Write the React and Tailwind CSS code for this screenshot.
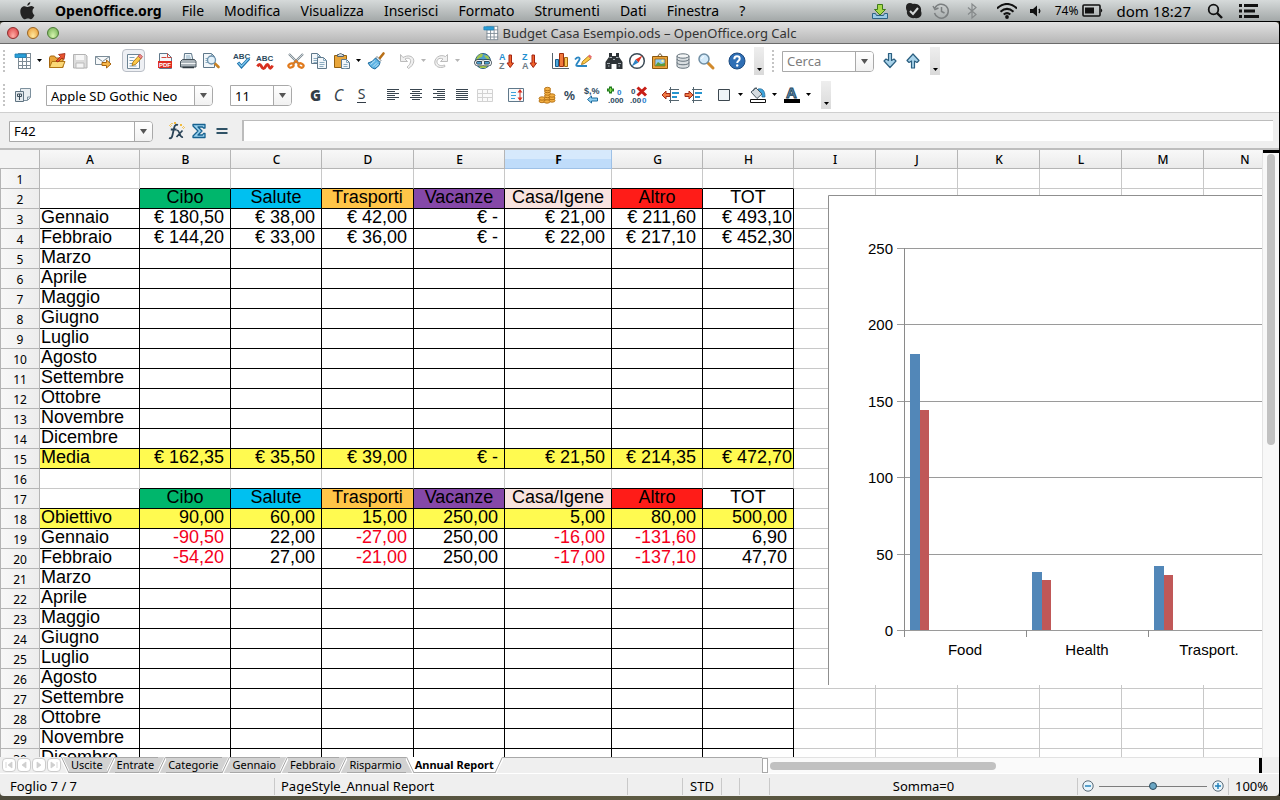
import React from "react";

/* ---------- icons ---------- */

const Svg = ({ children, s = 18, className = "" }) => (
  <svg width={s} height={s} viewBox="0 0 18 18" fill="none" aria-hidden="true" className={"shrink-0 overflow-visible " + className}>
    {children}
  </svg>
);

const Label = ({ x, y, size = 7, fill = "#2c4a5e", children }) => (
  <text x={x} y={y} fontSize={size} fill={fill} fontWeight="700" fontFamily='"Liberation Sans", sans-serif'>
    {children}
  </text>
);

const Lens = ({ x, y, r = 4 }) => (
  <g>
    <path d={`M${x + r * 0.7} ${y + r * 0.7}L${x + r + 3} ${y + r + 3}`} stroke="#c98122" strokeWidth="2.6" strokeLinecap="round" />
    <circle cx={x} cy={y} r={r} fill="#e4f2fb" stroke="#6f93ad" strokeWidth="1.4" />
  </g>
);

const Page = ({ x, y, w = 9, h = 12 }) => (
  <g>
    <path d={`M${x} ${y}h${w - 3}l3 3v${h - 3}h-${w}z`} fill="#f3f7fa" stroke="#60788a" />
    <path d={`M${x + w - 3} ${y}v3h3M${x + 2} ${y + 5}h${w - 4}M${x + 2} ${y + 7}h${w - 4}M${x + 2} ${y + 9}h${w - 5}`} stroke="#7fa3ba" strokeWidth="0.9" />
  </g>
);

const Arrow = ({ d }) => <path d={d} fill="#a9d3ea" stroke="#2b5f80" strokeWidth="1.2" strokeLinejoin="round" />;

const SheetGlyph = ({ s }) => (
  <Svg s={s}>
    <path d="M4.500 1.500h12v15h-12z" fill="#fff" />
    <path d="M4.500 1.500v15M8.500 1.500v15M12.500 1.500v15M16.500 1.500v15M4 1.500h13M4 5.500h13M4 9.500h13M4 13.500h13M4 16.500h13" stroke="#7d8b95" />
    <path d="M1 2h11v3.500H1z" fill="#2a9fd8" stroke="#1b7fb5" strokeWidth="0.8" />
  </Svg>
);

const Lines = ({ rows }) => (
  <Svg>
    {rows.map(([a, b], i) => (
      <path key={i} d={`M${a} ${3.5 + i * 2}H${b}`} stroke="#39454f" strokeWidth="1" />
    ))}
  </Svg>
);

const Sort = ({ a, b, ca, cb }) => (
  <Svg>
    <Label x={2} y={8} size={9}>{""}</Label>
    <Label x={2} y={8} size={9} fill={ca}>{a}</Label>
    <Label x={2} y={17} size={9} fill={cb}>{b}</Label>
    <path d="M12 3h2.500v8h2l-3.250 4.500L10 11h2z" fill="#f0642c" stroke="#a32312" />
  </Svg>
);

const Indent = ({ left }) => (
  <Svg>
    <path d="M8 3.500h10M8 14.500h10M9.500 1v16" stroke="#54656f" />
    <path d="M11 7h7M11 11h5" stroke="#2695cf" strokeWidth="2" />
    <path d={left ? "M1 9l4-4v2.500h4v3H5V13z" : "M9 9L5 5v2.500H1v3h4V13z"} fill="#f27b45" stroke="#a32a17" strokeLinejoin="round" />
  </Svg>
);

const icons = {
  sheet: <SheetGlyph />,
  open: (
    <Svg>
      <path d="M1.500 15.500v-10l1-1.500h4l1.500 2h7v9.500z" fill="#e9a63a" stroke="#a4650f" />
      <path d="M1.500 15.500l2.500-6h13l-2.500 6z" fill="#fbd877" stroke="#b07414" strokeLinejoin="round" />
      <path d="M8 9l4.500-4.500L10.500 2.500 17 1.500l-1 6-2-1.500L10 10z" fill="#e8532e" stroke="#9c2413" strokeWidth="0.8" />
    </Svg>
  ),
  save: (
    <Svg>
      <path d="M2.500 2.500h12l1.500 1.500v12h-13.500z" fill="#dcdcdc" stroke="#b3b3b3" />
      <path d="M5 3h8v5H5z" fill="#f7f7f7" />
      <path d="M5 11h8v5H5z" fill="#f4f4f4" stroke="#bbb" />
    </Svg>
  ),
  mail: (
    <Svg>
      <path d="M1.500 4.500h14v8h-14z" fill="#f7f9fa" stroke="#7b8c98" />
      <path d="M1.500 4.500l7 5 7-5" stroke="#7b8c98" />
      <path d="M8 10.500h4.500V8L17 12l-4.500 4v-2.500H8z" fill="#f8b84b" stroke="#a8650f" />
    </Svg>
  ),
  edit: (
    <Svg>
      <path d="M2.500 2.500h12v14h-12z" fill="#fbfcfd" stroke="#6c8494" />
      <path d="M4.500 5.500h5M4.500 8.500h4M4.500 11.500h4M4.500 14h7" stroke="#7fa3ba" />
      <path d="M7 13.500l1-3.500 6-6.500 2.500 2.500-6 6.500z" fill="#fbc94a" stroke="#a8740f" strokeWidth="0.900" />
      <path d="M13.200 4.200l1.800-2 2.500 2.500-1.800 2z" fill="#ef8d8d" stroke="#b34545" strokeWidth="0.800" />
    </Svg>
  ),
  pdf: (
    <Svg>
      <path d="M3.500 1.500h8l4 4v11h-12z" fill="#f3f7fa" stroke="#60788a" />
      <path d="M11.500 1.500v4h4M5.500 5.500h5" stroke="#d0453a" />
      <path d="M2 9h14v7H2z" fill="#dd2b20" />
      <Label x={3} y={15} size={6} fill="#fff">PDF</Label>
    </Svg>
  ),
  print: (
    <Svg>
      <path d="M5.500 1.500h7l1.500 7H5z" fill="#eef4f8" stroke="#60788a" />
      <path d="M7 4h4M7 6h5" stroke="#8fb0c4" />
      <path d="M1.500 9.500l2-2h12l1.500 2v5.500h-15.500z" fill="#a9b2b8" stroke="#47545d" />
      <path d="M2 11.500h14.500" stroke="#f0f3f4" />
      <path d="M3.500 15.500h11.500" stroke="#2f3940" strokeWidth="1.500" />
    </Svg>
  ),
  preview: (
    <Svg>
      <Page x={1.5} y={1.5} w={11} h={14} />
      <Lens x={9.5} y={8} />
    </Svg>
  ),
  spell: (
    <Svg>
      <Label x={0} y={6.500} size={8}>ABC</Label>
      <path d="M5 10.500l3.500 4 7.500-8" stroke="#1c70a8" strokeWidth="3.200" />
      <path d="M5.500 11l3 3.200 7-7.400" stroke="#7fc7ee" strokeWidth="1.300" />
    </Svg>
  ),
  autospell: (
    <Svg>
      <Label x={0} y={9} size={8}>ABC</Label>
      <path d="M1.500 14.500q2-4 4 0t4 0q2-4 3.500 0t3.500-1" stroke="#d8301f" strokeWidth="2.800" />
    </Svg>
  ),
  cut: (
    <Svg>
      <path d="M2 2l10 10M16 2L6 12" stroke="#7c8991" strokeWidth="2.200" />
      <path d="M2 2l10 10M16 2L6 12" stroke="#dfe5e8" strokeWidth="0.800" />
      <ellipse cx="4" cy="13.500" rx="2.700" ry="2" stroke="#e07a1c" strokeWidth="2.200" transform="rotate(-25 4 13.500)" />
      <ellipse cx="14" cy="13.500" rx="2.700" ry="2" stroke="#e07a1c" strokeWidth="2.200" transform="rotate(25 14 13.500)" />
      <path d="M7 11l2-2 2 2" stroke="#e07a1c" strokeWidth="2" />
    </Svg>
  ),
  copy: (
    <Svg>
      <Page x={1.5} y={1.5} w={9} h={10} />
      <Page x={7.5} y={5.5} w={9} h={11} />
    </Svg>
  ),
  paste: (
    <Svg>
      <path d="M1.500 3.500h12v12h-12z" fill="#e9a63a" stroke="#94600f" />
      <path d="M4.500 4.500V2.500h1.500l1.500-1.500 1.500 1.500h1.500v2z" fill="#cfd6da" stroke="#56636b" />
      <Page x={8.5} y={7.5} w={8} h={9} />
    </Svg>
  ),
  brush: (
    <Svg>
      <path d="M16.500 1.500l-4 5" stroke="#b86f17" strokeWidth="2.600" strokeLinecap="round" />
      <path d="M10 4.500l4 4-1.500 1.500-4-4z" fill="#e8edf0" stroke="#5c6c77" strokeWidth="0.800" />
      <path d="M8.500 6l4.500 4.500-1 3-4 3.500-2.500-1-2-1.500-2.500-3.500 4-1.500z" fill="#5fb4e4" stroke="#1f6d9f" strokeLinejoin="round" />
      <path d="M8 8.500l-4.500 4M10 10.500l-4 4M11.500 12l-3 3" stroke="#d5effc" strokeWidth="0.800" />
    </Svg>
  ),
  undo: (
    <Svg>
      <path d="M2.500 2.500v7h7l-2.500-2.500c4-2 7 0 5 4.500-.5 1.500-2 2.500-3 3.500l1.500 1.500c6-3.500 7-10 2.500-12-3-1.500-6 0-8 1z" fill="#f0f0f0" stroke="#bcbcbc" strokeLinejoin="round" />
    </Svg>
  ),
  redo: (
    <Svg>
      <path d="M15.500 2.500v7h-7l2.500-2.500c-4-2-7.500 1-5.500 4.500 1.500 2.500 4.500 2.500 7 1.500l.5 1.500c-4 2-8.500 1-10-2.500-1.500-5.500 4.500-10.500 10.500-7.500z" fill="#f0f0f0" stroke="#bcbcbc" strokeLinejoin="round" />
    </Svg>
  ),
  globe: (
    <Svg>
      <circle cx="9" cy="9" r="7.500" fill="#4d9fd0" stroke="#2a5c7e" />
      <path d="M3 5q3-4 6-3l-1 3-3 1-2 3-1-1zM10 3l4 1 2 4-3-1-2-2zM4 12q5 3 10 1l-2 3H6z" fill="#a3c64c" />
      <rect x="1.500" y="8.500" width="8" height="4.500" rx="2.250" stroke="#2b3a44" strokeWidth="2.600" />
      <rect x="8.500" y="8.500" width="8" height="4.500" rx="2.250" stroke="#2b3a44" strokeWidth="2.600" />
      <rect x="1.500" y="8.500" width="8" height="4.500" rx="2.250" stroke="#eef2f4" strokeWidth="1.200" />
      <rect x="8.500" y="8.500" width="8" height="4.500" rx="2.250" stroke="#eef2f4" strokeWidth="1.200" />
    </Svg>
  ),
  sortAsc: <Sort a="A" b="Z" ca="#1f8fd0" cb="#6f7c85" />,
  sortDesc: <Sort a="Z" b="A" ca="#1f8fd0" cb="#6f7c85" />,
  chart: (
    <Svg>
      <path d="M1.500 1v15.500H18" stroke="#55636c" />
      <path d="M4.500 7.500h3v7h-3z" fill="#4fa9de" stroke="#1a5e8c" />
      <path d="M8.500 1.500h4v13h-4z" fill="#f27a3c" stroke="#9c2f10" />
      <path d="M13.500 5.500h3v9h-3z" fill="#fac455" stroke="#a0680f" />
    </Svg>
  ),
  draw: (
    <Svg>
      <path d="M1 7.500c3-3.500 6-2 4 1s-4.500 5.500-1 5.500 5 0 9 0" stroke="#2a86c2" strokeWidth="1.800" />
      <path d="M7.500 12.500l1-3L14.500 4 17 6.500l-6.500 5z" fill="#fbc94a" stroke="#a8740f" strokeWidth="0.900" />
      <path d="M14 4.200l1.500-1.700L18 4.700l-1.500 1.800z" fill="#e86d6d" />
    </Svg>
  ),
  find: (
    <Svg>
      <path d="M4 1h3v3h4V1h3v4l3.500 5v7h-6v-5h-5v5h-6v-7L4 5z" fill="#2d3337" />
      <path d="M2 11.500h3M13 11.500h3M4.500 5.500h2.500M11 5.500h2.500M8 7.500h2M3 14h1.500M13.500 14H15" stroke="#a9b1b6" />
    </Svg>
  ),
  compass: (
    <Svg>
      <circle cx="9" cy="9" r="7.300" fill="#fff" stroke="#3b4a55" strokeWidth="1.500" />
      <path d="M14.500 3.500L10.500 10.500 7.500 7.500z" fill="#dd3322" />
      <path d="M3.500 14.500L7.500 7.500l3 3z" fill="#2d84c4" />
    </Svg>
  ),
  gallery: (
    <Svg>
      <path d="M6 5l3-3.500L12 5" stroke="#6b5530" />
      <path d="M1.500 4.500h15v12h-15z" fill="#e9a43a" stroke="#8a560e" />
      <path d="M4 7h10v7H4z" fill="#8fcdf0" stroke="#8a560e" strokeWidth="0.700" />
      <path d="M4 14l3-4 3 2 4-1v3z" fill="#5f9a3a" />
      <circle cx="11.500" cy="9" r="1.200" fill="#fff3a6" />
    </Svg>
  ),
  db: (
    <Svg>
      <path d="M3 4v10c0 3 12 3 12 0V4z" fill="#d9dee1" stroke="#66737c" />
      <path d="M3 7c0 3 12 3 12 0M3 10.500c0 3 12 3 12 0" stroke="#66737c" />
      <ellipse cx="9" cy="4" rx="6" ry="2.200" fill="#f3f5f6" stroke="#66737c" />
    </Svg>
  ),
  zoom: (
    <Svg>
      <path d="M10 10l6 6" stroke="#d18a2c" strokeWidth="3" strokeLinecap="round" />
      <circle cx="7" cy="7" r="5" fill="#d3eafa" stroke="#6f8ea4" strokeWidth="1.500" />
      <path d="M4.500 7a3 3 0 0 1 2.500-2.500" stroke="#fff" />
    </Svg>
  ),
  help: (
    <Svg>
      <circle cx="9" cy="9" r="8" fill="#2f6fb5" stroke="#1c4a80" />
      <path d="M6.300 7.200c0-4 5.400-3.500 5.400-.5 0 2-2.500 2-2.500 4.300" stroke="#fff" strokeWidth="2" />
      <circle cx="9.200" cy="13.500" r="1.200" fill="#fff" />
    </Svg>
  ),
  down: <Svg><Arrow d="M7.500 1.500h3v7l2.500-1.500 2 2L9 15.500l-6-6.500 2-2 2.500 1.500z" /></Svg>,
  up: <Svg><Arrow d="M7.500 16h3V9l2.500 1.500 2-2L9 2 3 8.500l2 2L7.500 9z" /></Svg>,
  styles: (
    <Svg>
      <path d="M6.500 2.500h10v9l-3 3h-7z" fill="#e9eef1" stroke="#7d909d" />
      <path d="M13.500 14v-3h3" stroke="#7d909d" />
      <path d="M1.500 5.500h8v10h-8z" fill="#e3e9ed" stroke="#5f7381" />
      <path d="M5.500 8v6M3.500 8h4v2.500h-4z" stroke="#3e4f5b" />
    </Svg>
  ),
  bold: <span className="text-[15px] leading-5 font-black text-[#333d47]">G</span>,
  italic: <span className="text-[16px] leading-5 text-[#39434d] italic">C</span>,
  underline: <span className="border-b border-[#333d47] px-px text-[14px] leading-4 text-[#333d47]">S</span>,
  alignLeft: <Lines rows={[[3, 15], [3, 11], [3, 15], [3, 11], [3, 15], [3, 11]]} />,
  alignCenter: <Lines rows={[[3, 15], [5, 13], [3, 15], [5, 13], [3, 15], [5, 13]]} />,
  alignRight: <Lines rows={[[3, 15], [7, 15], [3, 15], [7, 15], [3, 15], [7, 15]]} />,
  justify: <Lines rows={[[3, 15], [3, 15], [3, 15], [3, 15], [3, 15], [3, 15]]} />,
  merge: (
    <Svg>
      <path d="M1.500 3.500h15v12h-15zM1.500 7.500h15M1.500 11.500h15M6.500 3.500v12M11.500 3.500v4M11.500 11.500v4" fill="#fafafa" stroke="#d2d2d2" />
    </Svg>
  ),
  rowHeight: (
    <Svg>
      <path d="M1.500 2.500h15v13h-15z" fill="#f7fafc" stroke="#60788a" />
      <path d="M4 6.500h5M4 9.500h5M4 12.500h4" stroke="#3da0d8" />
      <path d="M13 4.500v9" stroke="#d8301f" />
      <path d="M13 3l2.500 3.500h-5zM13 15l2.500-3.500h-5z" fill="#d8301f" />
    </Svg>
  ),
  currency: (
    <Svg>
      <g fill="#f4b044" stroke="#b06d12" strokeWidth="0.900">
        <ellipse cx="4" cy="15" rx="3" ry="1.700" />
        <ellipse cx="4" cy="12.500" rx="3" ry="1.700" />
        <ellipse cx="9.500" cy="12.500" rx="3" ry="1.700" />
        <ellipse cx="9.500" cy="10" rx="3" ry="1.700" />
        <ellipse cx="9.500" cy="7.500" rx="3" ry="1.700" />
        <ellipse cx="9.500" cy="5" rx="3" ry="1.700" />
        <ellipse cx="9.500" cy="3" rx="3" ry="1.700" />
        <ellipse cx="14" cy="14.500" rx="3" ry="1.700" />
        <ellipse cx="14" cy="12" rx="3" ry="1.700" />
        <ellipse cx="14" cy="9.500" rx="3" ry="1.700" />
        <ellipse cx="9" cy="15.500" rx="3" ry="1.700" />
      </g>
    </Svg>
  ),
  percent: <span className="text-[13px] leading-4 font-semibold text-[#34495a]">%</span>,
  stdFormat: (
    <Svg>
      <Label x={0} y={8} size={9}>$,%</Label>
      <path d="M3.500 13.500l4-3.500v2h6v3h-6v2z" fill="#8fd0f2" stroke="#1d6c9e" strokeLinejoin="round" />
    </Svg>
  ),
  addDecimal: (
    <Svg>
      <path d="M3.500 .5v7M0 4h7" stroke="#1f7a1c" strokeWidth="3" />
      <path d="M3.500 2v4M1.500 4h4" stroke="#8be04c" />
      <Label x={10} y={9} size={8} fill="#2a7fd0">0</Label>
      <Label x={1} y={16.500} size={8}>.000</Label>
    </Svg>
  ),
  delDecimal: (
    <Svg>
      <Label x={1} y={8} size={8}>0</Label>
      <Label x={0} y={16.500} size={8}>.00</Label>
      <Label x={12} y={16.500} size={8} fill="#2a7fd0">0</Label>
      <path d="M7.500 1.500l8.500 8M16 1.500l-8.500 8" stroke="#c81e16" strokeWidth="3" />
    </Svg>
  ),
  indentLess: <Indent left />,
  indentMore: <Indent />,
  borders: <Svg><path d="M3.500 3.500h11v11h-11z" fill="#eff4f7" stroke="#3c474f" /></Svg>,
  fill: (
    <Svg>
      <path d="M9 3c4-1 7 1 7 8h-3c0-4-1-5-3-5z" fill="#3ea4dc" stroke="#1c6390" strokeWidth="0.700" />
      <path d="M2 6l5-4 6 6-5 4.500z" fill="#d5dbdf" stroke="#4b5862" />
      <path d="M4 5q1-4 4-3" stroke="#4b5862" />
      <path d="M1.500 13.500h15v3h-15z" fill="#fff" stroke="#111" />
    </Svg>
  ),
  fontColor: (
    <Svg>
      <text x="3" y="12" fontSize="15" fontWeight="700" fill="#5c8fb3" stroke="#26465c" strokeWidth="0.900" fontFamily='"Liberation Sans", sans-serif'>A</text>
      <path d="M1 13h16v4H1z" fill="#000" />
    </Svg>
  ),
  fx: (
    <Svg>
      <path d="M2 16c2 .8 3-.5 3.500-3L7.200 5.500C7.800 3 9.200 2.300 11 3M3.800 7.500h5.700" stroke="#2b4457" strokeWidth="1.800" />
      <path d="M9.500 8.500c2-.5 2 .5 3 3s1.500 4 3.500 3.500M15.500 8.500l-6 6.500" stroke="#2b4457" strokeWidth="1.700" />
      <path d="M2.500 3.500l1-1 1 1-1 1zM7 1l1-1 1 1-1 1zM13 3l1-1 1 1-1 1zM15.500 5.500l1-1 1 1-1 1zM4.500 1.500l.5-.5.5.5-.5.500z" stroke="#f0b429" strokeWidth="0.900" />
    </Svg>
  ),
  sum: (
    <Svg>
      <path d="M3 2.500h12v3.500h-1.500L12.500 5H8l4 4-4 4h4.500l1-1.500H15v4H3V14l5-5-5-5z" fill="#9bd3f0" stroke="#17618f" strokeWidth="1.300" strokeLinejoin="round" />
    </Svg>
  ),
  equals: <Svg><path d="M3.500 7h11M3.500 11h11" stroke="#2f5266" strokeWidth="1.800" /></Svg>,
};

/* ---------- toolbar parts ---------- */

const Tool = ({ icon, label, pressed }) => (
  <button
    type="button"
    aria-label={label}
    className={
      "flex h-[23px] w-[23px] shrink-0 items-center justify-center rounded-sm " +
      (pressed ? "border border-[#b9bec6] bg-[#eef0f4]" : "")
    }
  >
    {icons[icon]}
  </button>
);

const Caret = ({ label, dim }) => (
  <button type="button" aria-label={label} className="flex h-[23px] w-[11px] shrink-0 items-center justify-center">
    <svg width="5" height="3" viewBox="0 0 5 3" aria-hidden="true">
      <path d="M0 0h5L2.500 3z" fill={dim ? "#b5b5b5" : "#000"} />
    </svg>
  </button>
);

const More = () => (
  <button type="button" aria-label="Altri controlli" className="flex h-7 w-[10px] shrink-0 items-end justify-center bg-linear-to-b from-[#eeeeee] to-[#dadada] pb-1">
    <svg width="5" height="3" viewBox="0 0 5 3" aria-hidden="true">
      <path d="M0 0h5L2.500 3z" fill="#000" />
    </svg>
  </button>
);

const Grip = () => <span className="h-[22px] w-0 shrink-0 border-l-2 border-dotted border-[#c4c4c4]" />;

const ArrowFace = () => (
  <svg width="7" height="5" viewBox="0 0 7 5" aria-hidden="true">
    <path d="M0 0h7L3.500 5z" fill="#555" />
  </svg>
);

const boxFrame = "relative mt-0.5 flex h-[21px] shrink-0 overflow-hidden rounded-r border border-[#a9a9a9] bg-white text-[13px] ";
const arrowFrame = "flex w-[18px] shrink-0 items-center justify-center border-l border-[#a9a9a9] bg-linear-to-b from-white to-[#f1f1f1]";

const SelectBox = ({ label, options, width }) => (
  <div className={boxFrame + width}>
    <select aria-label={label} className="h-full w-full appearance-none bg-transparent pl-1 leading-[18px] outline-none">
      {options.map((o) => (
        <option key={o}>{o}</option>
      ))}
    </select>
    <span className={"pointer-events-none absolute inset-y-0 right-0 " + arrowFrame}>
      <ArrowFace />
    </span>
  </div>
);

const InputBox = ({ label, value, placeholder, width }) => (
  <div className={boxFrame + width}>
    <input
      aria-label={label}
      defaultValue={value}
      placeholder={placeholder}
      className="h-[18px] w-0 min-w-0 flex-1 bg-transparent px-1 leading-[18px] outline-none placeholder:text-[#7d7d7d]"
    />
    <button type="button" aria-label={"Apri " + label} className={arrowFrame}>
      <ArrowFace />
    </button>
  </div>
);

const Group = ({ children }) => <div className="flex shrink-0 items-center">{children}</div>;

const standardGroups = [
  [["sheet", "Nuovo", "caret"], ["open", "Apri"], ["save", "Salva"], ["mail", "Documento come e-mail"]],
  [["edit", "Modifica file", "pressed"]],
  [["pdf", "Esporta PDF"], ["print", "Stampa"], ["preview", "Anteprima"]],
  [["spell", "Controllo ortografico"], ["autospell", "Controllo automatico"]],
  [["cut", "Taglia"], ["copy", "Copia"], ["paste", "Incolla", "caret"], ["brush", "Pennello di formato"]],
  [["undo", "Annulla", "dim"], ["redo", "Ripristina", "dim"]],
  [["globe", "Collegamento"], ["sortAsc", "Ordine crescente"], ["sortDesc", "Ordine decrescente"]],
  [["chart", "Diagramma"], ["draw", "Disegno"]],
  [["find", "Cerca e sostituisci"], ["compass", "Navigatore"], ["gallery", "Galleria"], ["db", "Sorgenti dati"], ["zoom", "Zoom"]],
  [["help", "Guida"]],
];

const formatGroups = [
  [["bold", "Grassetto"], ["italic", "Corsivo"], ["underline", "Sottolineato"]],
  [["alignLeft", "Allinea a sinistra"], ["alignCenter", "Centra"], ["alignRight", "Allinea a destra"], ["justify", "Giustificato"], ["merge", "Unisci celle"]],
  [["rowHeight", "Altezza riga"]],
  [["currency", "Valuta"], ["percent", "Percentuale"], ["stdFormat", "Formato standard"], ["addDecimal", "Aggiungi decimale"], ["delDecimal", "Elimina decimale"]],
  [["indentLess", "Riduci rientro"], ["indentMore", "Aumenta rientro"]],
  [["borders", "Bordo", "caret"], ["fill", "Colore di sfondo", "caret"], ["fontColor", "Colore carattere", "caret"]],
];

const Groups = ({ data }) => (
  <div className="flex shrink-0 items-center gap-2">
    {data.map((g, i) => (
      <Group key={i}>
        {g.map(([icon, label, mode]) => (
          <React.Fragment key={icon}>
            <Tool icon={icon} label={label} pressed={mode === "pressed"} />
            {(mode === "caret" || mode === "dim") && <Caret label={label + ": opzioni"} dim={mode === "dim"} />}
          </React.Fragment>
        ))}
      </Group>
    ))}
  </div>
);

/* ---------- menu bar ---------- */

const menus = ["File", "Modifica", "Visualizza", "Inserisci", "Formato", "Strumenti", "Dati", "Finestra", "?"];

const MenuBar = () => (
  <header className="flex h-[22px] shrink-0 items-center justify-between border-b border-black bg-linear-to-b from-[#d6dada] to-[#a3a8a8] px-5 text-[14px] leading-5">
    <nav className="flex items-center gap-5">
      <button type="button" aria-label="Menu Apple">
        <svg width="15" height="18" viewBox="0 0 15 18" aria-hidden="true">
          <path d="M10.300 0c.1 1.700-1.300 3.600-3 3.700C7.100 2 8.700.2 10.300 0zM14.500 13c-.8 2-2 4.200-3.500 4.300-1.200.1-1.600-.7-3-.7s-1.900.7-3 .7C3 17.300.3 13.500.3 9.500c0-3.500 2.200-5.300 4.300-5.300 1.300 0 2.300.8 3.200.8.800 0 2-.9 3.600-.9 1.100.1 2.200.6 2.900 1.600-2.600 1.600-2.200 5.900.2 7.300z" fill="#222" />
        </svg>
      </button>
      <button type="button" className="font-bold">OpenOffice.org</button>
      {menus.map((m) => (
        <button key={m} type="button">{m}</button>
      ))}
    </nav>
    <div className="flex items-center gap-3">
      <Svg>
        <path d="M1.500 11.500h3l1 2h7l1-2h3v5h-15z" fill="#9bcbe6" stroke="#2c6384" />
        <path d="M6.500 2.500h5v5h3L9 13 3.500 7.500h3z" fill="#a7d84a" stroke="#3d7a18" />
      </Svg>
      <div className="ml-1 flex items-center gap-[9px]">
        <Svg>
          <path d="M1 5c0-4 4-5 7-3 5-1 9 3 8 7 2 5-2 8-6 7-5 1-9-3-8-7-1-1-1-3-1-4z" fill="#222" />
          <path d="M5 9l3 3 5-6" stroke="#d5d8d8" strokeWidth="2" />
        </Svg>
        <Svg>
          <path d="M3 6a7 7 0 1 1-.5 5M1 4l2 3.500L6.500 6M9.500 5v4.500l3 1.500" stroke="#7b7f80" strokeWidth="1.500" />
        </Svg>
        <Svg className="mx-1">
          <path d="M5 5.500l8 7L9 16V2l4 3.500-8 7" stroke="#85898a" strokeWidth="1.200" />
        </Svg>
      </div>
      <svg width="20" height="16" viewBox="0 0 20 16" fill="none" aria-hidden="true">
        <path d="M0 5.500q10-9 20 0M3.500 8.700q6.500-5.500 13 0M6.700 11.500q3.300-2.700 6.600 0" stroke="#111" strokeWidth="2.100" />
        <circle cx="10" cy="14" r="1.900" fill="#111" />
      </svg>
      <svg width="14" height="12" viewBox="0 0 14 12" fill="none" aria-hidden="true">
        <path d="M1 4h3l4-3.500v11L4 8H1z" fill="#111" />
        <path d="M10 4q1.500 2 0 4" stroke="#111" strokeWidth="1.500" />
      </svg>
      <div className="flex items-center gap-1">
        <span className="text-[12px]">74%</span>
        <svg width="22" height="13" viewBox="0 0 22 13" fill="none" aria-hidden="true">
          <rect x="1" y="1" width="17" height="11" rx="1" stroke="#111" strokeWidth="1.600" />
          <path d="M3 3.500h9v6H3z" fill="#111" />
          <path d="M19 4.500q2.500 2 0 4z" fill="#111" />
        </svg>
      </div>
      <span className="text-[15px]">dom 18:27</span>
      <svg width="16" height="16" viewBox="0 0 16 16" fill="none" aria-hidden="true" className="ml-1">
        <circle cx="6.500" cy="6.500" r="4.800" stroke="#111" strokeWidth="1.800" />
        <path d="M10 10l5 5" stroke="#111" strokeWidth="2.400" />
      </svg>
      <svg width="21" height="14" viewBox="0 0 21 14" aria-hidden="true" className="ml-1">
        <path d="M0 0h3v3H0zM5 0h14v3H5zM0 5.500h3v3H0zM5 5.500h11v3H5zM0 11h3v3H0zM5 11h15v3H5z" fill="#111" />
      </svg>
    </div>
  </header>
);

const Light = ({ label, tone }) => (
  <button type="button" aria-label={label} className={"h-3 w-3 rounded-full border bg-radial-[at_50%_80%] " + tone} />
);

const TitleBar = () => (
  <div className="grid h-[22px] shrink-0 grid-cols-[1fr_auto_1fr] items-center rounded-t border-b border-[#6b6b6b] bg-linear-to-b from-[#e2e2e2] to-[#b6b6b6] px-[7px]">
    <div className="flex gap-2">
      <Light label="Chiudi" tone="border-[#8e2b2b] from-[#ffb0a8] to-[#d8363a]" />
      <Light label="Riduci" tone="border-[#9a6420] from-[#ffe9a0] to-[#e8952c]" />
      <Light label="Ingrandisci" tone="border-[#4b7a35] from-[#d8f5b0] to-[#6aaa4c]" />
    </div>
    <h1 className="flex items-center gap-1 text-[13px] leading-5 text-[#333]">
      <SheetGlyph s={16} />
      Budget Casa Esempio.ods – OpenOffice.org Calc
    </h1>
  </div>
);

/* ---------- sheet ---------- */

const columns = ["A", "B", "C", "D", "E", "F", "G", "H", "I", "J", "K", "L", "M", "N"];
const colWidths = ["w-[40px]", "w-[100px]", "w-[91px]", "w-[91px]", "w-[92px]", "w-[91px]", "w-[107px]", "w-[91px]", "w-[91px]", "w-[82px]", "w-[82px]", "w-[82px]", "w-[82px]", "w-[82px]", "w-[82px]"];
const heads = ["", "Cibo", "Salute", "Trasporti", "Vacanze", "Casa/Igene", "Altro", "TOT"];
const headFill = ["", "bg-[#00b66c]", "bg-[#00c0f0]", "bg-[#ffc548]", "bg-[#8548a8]", "bg-[#f8e3df]", "bg-[#ff1c18]", ""];
const months = ["Gennaio", "Febbraio", "Marzo", "Aprile", "Maggio", "Giugno", "Luglio", "Agosto", "Settembre", "Ottobre", "Novembre", "Dicembre"];

const spend = {
  Gennaio: ["€ 180,50", "€ 38,00", "€ 42,00", "€ -", "€ 21,00", "€ 211,60", "€ 493,10"],
  Febbraio: ["€ 144,20", "€ 33,00", "€ 36,00", "€ -", "€ 22,00", "€ 217,10", "€ 452,30"],
};
const gap = {
  Gennaio: ["-90,50", "22,00", "-27,00", "250,00", "-16,00", "-131,60", "6,90"],
  Febbraio: ["-54,20", "27,00", "-21,00", "250,00", "-17,00", "-137,10", "47,70"],
};

const rows = [
  { kind: "spacer" },
  { kind: "head", cells: heads },
  ...months.map((m) => ({ kind: "data", cells: [m, ...(spend[m] || [])] })),
  { kind: "mark", cells: ["Media", "€ 162,35", "€ 35,50", "€ 39,00", "€ -", "€ 21,50", "€ 214,35", "€ 472,70"] },
  { kind: "spacer" },
  { kind: "head", cells: heads },
  { kind: "mark", cells: ["Obiettivo", "90,00", "60,00", "15,00", "250,00", "5,00", "80,00", "500,00"] },
  ...months.map((m) => ({ kind: "data", cells: [m, ...(gap[m] || [])] })),
];

function cellClass(kind, c, text) {
  const cls = ["h-5 whitespace-nowrap border-r border-b p-0 align-top leading-4"];
  const inTable = c < 8;
  if (kind === "spacer") {
    cls.push("border-r-[#c8c8c8]", c > 0 && inTable ? "border-b-black" : "border-b-[#c8c8c8]");
  } else {
    cls.push(inTable ? "border-black" : "border-[#c8c8c8]");
  }
  if (kind === "head" && inTable) cls.push("text-center", headFill[c]);
  else if (c === 0) cls.push("pl-px text-left");
  else cls.push("text-right", c === 7 && text.startsWith("€") ? "pr-px" : "pr-[6px]");
  if (kind === "mark" && inTable) cls.push("bg-[#fffa50]");
  if (text.startsWith("-")) cls.push("text-[#f5001d]");
  return cls.join(" ");
}

const axis = [250, 200, 150, 100, 50, 0];
const series = [
  ["Food", 180.5, 144.2],
  ["Health", 38, 33],
  ["Trasport.", 42, 36],
];

const Chart = () => (
  <svg width="620" height="490" viewBox="0 0 620 490" role="img" aria-label="Food, Health, Trasport." className="absolute top-[45px] left-[828px] bg-white font-['Liberation_Sans',Arial,sans-serif]">
    <path d="M.5 490V.5H620" fill="none" stroke="#8f8f8f" />
    {axis.map((v) => {
      const y = Math.round(435 - (v * 382) / 250) + 0.5;
      return (
        <g key={v}>
          <path d={`M69 ${y}H620`} stroke="#9a9a9a" />
          <text x="65" y={y + 5} textAnchor="end" fontSize="15">{v}</text>
        </g>
      );
    })}
    <path d="M76.500 53V442" stroke="#8a8a8a" />
    {series.map(([name, a, b], i) => {
      const x = 76 + i * 122;
      const ha = Math.round((a * 382) / 250);
      const hb = Math.round((b * 382) / 250);
      return (
        <g key={name}>
          <path d={`M${x + 122}.5 435V442`} stroke="#8a8a8a" />
          <rect x={x + 6} y={435 - ha} width="10" height={ha} fill="#5287b8" />
          <rect x={x + 16} y={435 - hb} width="9" height={hb} fill="#c05858" />
          <text x={x + 61} y="460" textAnchor="middle" fontSize="15">{name}</text>
        </g>
      );
    })}
  </svg>
);

const Sheet = () => (
  <div className="flex min-h-0 flex-1">
    <div className="relative min-w-0 flex-1 overflow-hidden bg-white">
      <table className="w-[1286px] table-fixed border-separate border-spacing-0 font-['Liberation_Sans',Arial,sans-serif] text-[18px]">
        <colgroup>
          {colWidths.map((w, i) => (
            <col key={i} className={w} />
          ))}
        </colgroup>
        <thead className="font-['Noto_Sans',sans-serif] text-[12px]">
          <tr>
            <th aria-label="Seleziona tutto" className="h-[19px] border-r border-b border-[#b5b5b5] bg-[#f3f3f3] p-0" />
            {columns.map((c) => (
              <th
                key={c}
                scope="col"
                className={
                  "h-[19px] border-r border-b p-0 pt-px pl-px leading-[17px] " +
                  (c === "F"
                    ? "border-[#9dc0e6] bg-linear-to-b from-[#d6e9fc] from-50% to-[#bfdcfa] to-50% font-bold"
                    : "border-[#b5b5b5] bg-linear-to-b from-[#f8f8f8] to-[#ebebeb] font-medium")
                }
              >
                {c}
              </th>
            ))}
          </tr>
        </thead>
        <tbody>
          {rows.map((row, r) => (
            <tr key={r}>
              <th scope="row" className="h-5 border-r border-b border-l border-[#b5b5b5] bg-linear-to-r from-[#f7f7f7] to-[#ededed] p-0 pt-[2px] font-['Noto_Sans',sans-serif] text-[12px] leading-[17px] font-normal">
                {r + 1}
              </th>
              {columns.map((c, i) => {
                const text = (row.cells && row.cells[i]) || "";
                return (
                  <td key={c} className={cellClass(row.kind, i, text)}>
                    <div className="h-[19px]">{text}</div>
                  </td>
                );
              })}
            </tr>
          ))}
        </tbody>
      </table>
      <Chart />
    </div>
    <div className="flex w-[17px] shrink-0 flex-col items-center border-l border-[#e4e4e4] bg-[#f8f8f8]">
      <div className="h-[3px] w-full bg-black" />
      <div className="mt-px h-[48%] w-2 rounded-full bg-[#c1c1c1]" />
    </div>
  </div>
);

/* ---------- tabs and status ---------- */

const tabs = ["Uscite", "Entrate", "Categorie", "Gennaio", "Febbraio", "Risparmio"];

const Slant = ({ back, left, right }) => (
  <svg width="8" height="16" viewBox="0 0 8 16" aria-hidden="true" className="shrink-0">
    <path d={back ? "M0 0v16h8z" : "M0 0h8L0 16z"} fill={left} />
    <path d={back ? "M0 0h8v16z" : "M8 0v16H0z"} fill={right} />
    <path d={back ? "M0 0l8 16" : "M8 0L0 16"} stroke="#fff" strokeWidth="3" />
    <path d={back ? "M.5 0l7.500 16" : "M7.500 0L0 16"} stroke="#999" strokeWidth="0.900" />
  </svg>
);

const navPaths = ["M4 4v6M10 4L6 7l4 3z", "M9 4L5 7l4 3z", "M5 4l4 3-4 3z", "M10 4v6M4 4l4 3-4 3z"];
const navLabels = ["Primo foglio", "Foglio precedente", "Foglio successivo", "Ultimo foglio"];

const TabRow = () => (
  <div className="flex h-[17px] shrink-0 items-start border-b border-white bg-[#efefef]">
    <div className="flex shrink-0 gap-px pt-px pl-[2px]">
      {navPaths.map((d, i) => (
        <button key={i} type="button" aria-label={navLabels[i]} className="h-[14px] w-[14px] rounded border border-[#cccccc] bg-white">
          <svg width="12" height="12" viewBox="1 1 12 12" aria-hidden="true">
            <path d={d} fill="#cfcfcf" stroke="#cfcfcf" strokeWidth="0.800" />
          </svg>
        </button>
      ))}
    </div>
    <div className="flex h-4 shrink-0 border-b border-[#a8a8a8] text-[11px] leading-[15px]">
      <Slant back left="#efefef" right="#d2d2d2" />
      {tabs.map((t, i) => (
        <React.Fragment key={t}>
          {i > 0 && <Slant left="#d2d2d2" right="#d2d2d2" />}
          <button type="button" className="border-t border-[#a8a8a8] bg-[#d2d2d2] pr-1 pl-0.5 leading-[14px]">{t}</button>
        </React.Fragment>
      ))}
      <Slant back left="#d2d2d2" right="#fff" />
      <button type="button" aria-current="page" className="bg-white px-px font-bold">Annual Report</button>
      <Slant left="#fff" right="#efefef" />
    </div>
    <div className="h-4 min-w-0 flex-1 border-t border-[#a8a8a8]" />
    <div className="flex h-4 w-[500px] shrink-0 items-center border-t border-[#e2e2e2] bg-[#fafafa]">
      <div className="h-full w-[6px] border border-[#a8a8a8] bg-white" />
      <div className="ml-0.5 h-2 w-[226px] rounded-full bg-[#c1c1c1]" />
      <div className="ml-auto h-full w-[3px] bg-black" />
    </div>
    <div className="w-[17px] shrink-0" />
  </div>
);

const ZoomGlyph = ({ plus }) => (
  <svg width="12" height="12" viewBox="0 0 12 12" fill="none" aria-hidden="true">
    <circle cx="6" cy="6" r="5.200" fill="#e8f5fc" stroke="#5b6b77" />
    <path d={plus ? "M3 6h6M6 3v6" : "M3 6h6"} stroke="#1c7fba" strokeWidth="1.400" />
  </svg>
);

const Divider = () => <span className="h-[17px] w-px shrink-0 bg-[#c9c9c9]" />;

const StatusBar = () => (
  <footer className="flex h-[22px] shrink-0 items-center rounded-b bg-[#efefef] pt-0.5 text-[13px] leading-5">
    <span className="w-[274px] shrink-0 pl-[10px]">Foglio 7 / 7</span>
    <Divider />
    <span className="w-[352px] shrink-0 pl-[6px]">PageStyle_Annual Report</span>
    <Divider />
    <span className="w-[54px] shrink-0" />
    <Divider />
    <span className="w-[38px] shrink-0 text-center">STD</span>
    <Divider />
    <span className="w-[17px] shrink-0" />
    <Divider />
    <span className="w-[29px] shrink-0" />
    <Divider />
    <span className="min-w-0 flex-1 text-center">Somma=0</span>
    <Divider />
    <div className="flex shrink-0 items-center gap-[5px] px-1">
      <button type="button" aria-label="Riduci zoom"><ZoomGlyph /></button>
      <input
        type="range"
        aria-label="Zoom"
        defaultValue="50"
        className="h-3 w-[108px] appearance-none bg-transparent [&::-webkit-slider-runnable-track]:h-px [&::-webkit-slider-runnable-track]:bg-[#7d7d7d] [&::-webkit-slider-thumb]:-mt-1 [&::-webkit-slider-thumb]:h-2 [&::-webkit-slider-thumb]:w-2 [&::-webkit-slider-thumb]:appearance-none [&::-webkit-slider-thumb]:rounded-full [&::-webkit-slider-thumb]:border [&::-webkit-slider-thumb]:border-[#2b4a5c] [&::-webkit-slider-thumb]:bg-[#6aa6c4]"
      />
      <button type="button" aria-label="Aumenta zoom"><ZoomGlyph plus /></button>
    </div>
    <Divider />
    <span className="w-[50px] shrink-0 pl-[6px]">100%</span>
  </footer>
);

export default function App() {
  return (
    <div className="flex h-screen flex-col overflow-hidden bg-linear-to-r from-[#4d4a3c] via-[#5d5a42] to-[#4a4636] font-['Noto_Sans',sans-serif] text-black">
      <MenuBar />
      <main className="mb-1 flex min-h-0 flex-1 flex-col border-r border-black">
        <TitleBar />
        <div role="toolbar" aria-label="Standard" className="flex h-[33px] shrink-0 items-center bg-white pl-[3px]">
          <Grip />
          <div className="ml-[6px] flex items-center">
            <Groups data={standardGroups} />
          </div>
          <div className="ml-[6px] flex items-center gap-2">
            <More />
            <Grip />
            <InputBox label="Cerca" placeholder="Cerca" width="w-[92px]" />
          </div>
          <div className="ml-1 flex items-center">
            <Tool icon="down" label="Trova successivo" />
            <Tool icon="up" label="Trova precedente" />
          </div>
          <div className="ml-[6px] flex">
            <More />
          </div>
        </div>
        <div role="toolbar" aria-label="Formattazione" className="flex h-[35px] shrink-0 items-center bg-white pl-[3px]">
          <Grip />
          <div className="mr-3 ml-[6px] flex items-center gap-3">
            <Tool icon="styles" label="Stili e formattazione" />
            <div className="flex items-center gap-[17px]">
              <SelectBox label="Tipo di carattere" options={["Apple SD Gothic Neo", "Arial", "Helvetica"]} width="w-[167px]" />
              <SelectBox label="Dimensione" options={["11", "12", "14"]} width="w-[62px]" />
            </div>
          </div>
          <Groups data={formatGroups} />
          <div className="ml-[7px] flex">
            <More />
          </div>
        </div>
        <div className="flex h-[38px] shrink-0 items-center border-t border-b-2 border-t-[#cfcfcf] border-b-[#bdbdbd] bg-[#efefef] pr-[6px] pl-[9px]">
          <InputBox label="Casella del nome" value="F42" width="w-[144px]" />
          <div className="mr-[9px] ml-[11px] flex">
            <Tool icon="fx" label="Creazione guidata funzione" />
            <Tool icon="sum" label="Somma" />
            <Tool icon="equals" label="Funzione" />
          </div>
          <input aria-label="Riga di digitazione" className="h-[21px] min-w-0 flex-1 border-t border-l-2 border-[#bcbcbc] bg-white px-1 text-[13px] outline-none" />
        </div>
        <Sheet />
        <TabRow />
        <StatusBar />
      </main>
    </div>
  );
}
